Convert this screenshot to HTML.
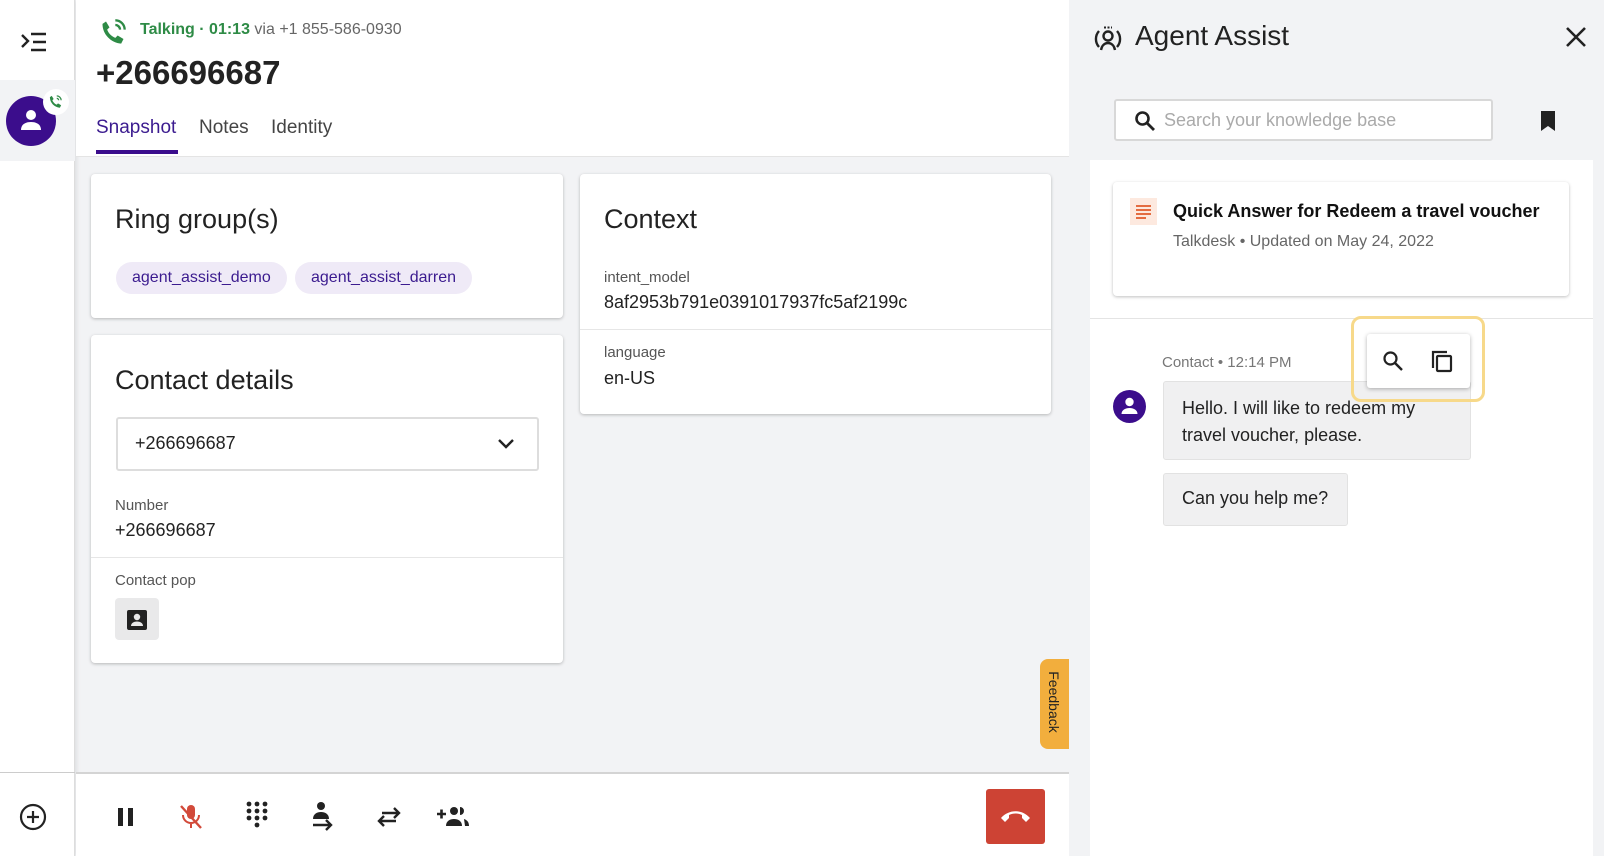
<!DOCTYPE html>
<html><head><meta charset="utf-8"><style>
*{box-sizing:border-box;margin:0;padding:0}
body{width:1604px;height:856px;position:relative;overflow:hidden;font-family:"Liberation Sans",sans-serif;background:#f2f3f5;color:#1c1c1e}
.a{position:absolute}
.card{position:absolute;background:#fff;border-radius:4px;box-shadow:0 1px 3px rgba(0,0,0,.25)}
.lbl{font-size:15px;color:#555}
.val{font-size:18px;color:#222}
.chip{position:absolute;height:32px;border-radius:16px;background:#efeaf7;color:#3b1b8f;font-size:16px;line-height:32px;padding:0 16px}
.ico{position:absolute}
</style></head><body>
<div class="a" style="left:0;top:0;width:75px;height:856px;background:#fff;border-right:1px solid #ddd;box-shadow:2px 0 4px rgba(0,0,0,.08)"></div>
<svg class="ico" style="left:20px;top:31px" width="28" height="22" viewBox="0 0 28 22"><path d="M2 4l6 6-6 6" fill="none" stroke="#222" stroke-width="2.4"/><path d="M11 3h15M13 11h13M11 19h15" stroke="#222" stroke-width="2.4"/></svg>
<div class="a" style="left:0;top:80px;width:75px;height:81px;background:#f2f3f5"></div>
<div class="a" style="left:6px;top:96px;width:50px;height:50px;border-radius:50%;background:#3b0d8c"></div>
<svg class="ico" style="left:20px;top:108px" width="22" height="24" viewBox="0 0 22 24"><circle cx="11" cy="7" r="5" fill="#fff"/><path d="M1 22c0-6 5-8 10-8s10 2 10 8z" fill="#fff"/></svg>
<div class="a" style="left:43px;top:89px;width:26px;height:26px;border-radius:50%;background:#fff"></div>
<svg class="ico" style="left:48px;top:94px" width="15" height="15" viewBox="0 0 24 24"><path d="M6 3l3 5-2 2c1 3 4 6 7 7l2-2 5 3-2 4C10 21 3 14 3 5z" fill="#2e8b46"/><path d="M14 3a7 7 0 0 1 7 7M14 7a3 3 0 0 1 3 3" stroke="#2e8b46" stroke-width="2" fill="none"/></svg>
<div class="a" style="left:0;top:772px;width:75px;height:1px;background:#ccc"></div>
<svg class="ico" style="left:19px;top:803px" width="28" height="28" viewBox="0 0 28 28"><circle cx="14" cy="14" r="12" fill="none" stroke="#222" stroke-width="2.2"/><path d="M14 8v12M8 14h12" stroke="#222" stroke-width="2.2"/></svg>

<div class="a" style="left:76px;top:0;width:993px;height:157px;background:#fff;border-bottom:1px solid #e4e4e4"></div>
<svg class="ico" style="left:99px;top:18px" width="28" height="28" viewBox="0 0 24 24"><path d="M6 3l3 5-2 2c1 3 4 6 7 7l2-2 5 3-2 4C10 21 3 14 3 5z" fill="#2e8b46"/><path d="M14 2a8 8 0 0 1 8 8M14 6a4 4 0 0 1 4 4" stroke="#2e8b46" stroke-width="2" fill="none"/></svg>
<div class="a" style="left:140px;top:21px;font-size:16px;color:#666"><b style="color:#2e8b46;font-weight:bold">Talking · 01:13</b> via +1 855-586-0930</div>
<div class="a" style="left:96px;top:54px;font-size:33px;font-weight:bold;color:#222">+266696687</div>
<div class="a" style="left:96px;top:117px;font-size:19px;color:#3b1b8f">Snapshot</div>
<div class="a" style="left:96px;top:150px;width:82px;height:4px;background:#3b0d8c"></div>
<div class="a" style="left:199px;top:117px;font-size:19px;color:#444">Notes</div>
<div class="a" style="left:271px;top:117px;font-size:19px;color:#444">Identity</div>

<div class="card" style="left:91px;top:174px;width:472px;height:144px">
<div class="a" style="left:24px;top:30px;font-size:27px;color:#222">Ring group(s)</div>
<div class="chip" style="left:25px;top:88px">agent_assist_demo</div>
<div class="chip" style="left:204px;top:88px">agent_assist_darren</div>
</div>
<div class="card" style="left:580px;top:174px;width:471px;height:240px">
<div class="a" style="left:24px;top:30px;font-size:27px;color:#222">Context</div>
<div class="a lbl" style="left:24px;top:95px">intent_model</div>
<div class="a val" style="left:24px;top:118px">8af2953b791e0391017937fc5af2199c</div>
<div class="a" style="left:0;top:155px;width:471px;height:1px;background:#e6e6e6"></div>
<div class="a lbl" style="left:24px;top:170px">language</div>
<div class="a val" style="left:24px;top:194px">en-US</div>
</div>
<div class="card" style="left:91px;top:335px;width:472px;height:328px">
<div class="a" style="left:24px;top:30px;font-size:27px;color:#222">Contact details</div>
<div class="a" style="left:25px;top:82px;width:423px;height:54px;border:2px solid #ddd;border-radius:3px"></div>
<div class="a val" style="left:44px;top:98px">+266696687</div>
<svg class="ico" style="left:406px;top:102px" width="18" height="14" viewBox="0 0 18 14"><path d="M2 3l7 7 7-7" fill="none" stroke="#222" stroke-width="2.4"/></svg>
<div class="a lbl" style="left:24px;top:162px">Number</div>
<div class="a val" style="left:24px;top:185px">+266696687</div>
<div class="a" style="left:0;top:222px;width:472px;height:1px;background:#e6e6e6"></div>
<div class="a lbl" style="left:24px;top:237px">Contact pop</div>
<div class="a" style="left:24px;top:263px;width:44px;height:42px;border-radius:4px;background:#e9e9ea"></div>
<svg class="ico" style="left:35px;top:274px" width="22" height="22" viewBox="0 0 22 22"><rect x="1" y="1" width="20" height="20" rx="2" fill="#222"/><circle cx="11" cy="8" r="3.2" fill="#e9e9ea"/><path d="M5 17c0-3 3-4.5 6-4.5s6 1.5 6 4.5z" fill="#e9e9ea"/></svg>
</div>

<div class="a" style="left:1040px;top:659px;width:29px;height:90px;background:#f2ae3d;border-radius:8px 0 0 8px"></div>
<div class="a" style="left:1009px;top:694px;width:90px;font-size:14px;color:#222;transform:rotate(90deg);text-align:center">Feedback</div>

<div class="a" style="left:76px;top:772px;width:993px;height:84px;background:#fff;border-top:2px solid #d4d4d4"></div>
<svg class="ico" style="left:115px;top:806px" width="22" height="22" viewBox="0 0 22 22"><rect x="3" y="2" width="5" height="18" fill="#222"/><rect x="13" y="2" width="5" height="18" fill="#222"/></svg>
<svg class="ico" style="left:178px;top:803px" width="26" height="28" viewBox="0 0 26 28"><rect x="9" y="2" width="8" height="14" rx="4" fill="#d24a3a"/><path d="M5 12c0 5 4 8 8 8s8-3 8-8M13 20v5" stroke="#d24a3a" stroke-width="2" fill="none"/><path d="M3 3l20 22" stroke="#d24a3a" stroke-width="2.4"/></svg>
<svg class="ico" style="left:244px;top:800px" width="26" height="32" viewBox="0 0 26 32"><g fill="#222"><circle cx="5" cy="4" r="2.4"/><circle cx="13" cy="4" r="2.4"/><circle cx="21" cy="4" r="2.4"/><circle cx="5" cy="11" r="2.4"/><circle cx="13" cy="11" r="2.4"/><circle cx="21" cy="11" r="2.4"/><circle cx="5" cy="18" r="2.4"/><circle cx="13" cy="18" r="2.4"/><circle cx="21" cy="18" r="2.4"/><circle cx="13" cy="25" r="2.4"/></g></svg>
<svg class="ico" style="left:310px;top:801px" width="26" height="32" viewBox="0 0 26 32"><circle cx="11" cy="5" r="4" fill="#222"/><path d="M3 18c0-5 4-7 8-7s8 2 8 7z" fill="#222"/><path d="M3 24h18M16 19l5 5-5 5" stroke="#222" stroke-width="2.4" fill="none"/></svg>
<svg class="ico" style="left:376px;top:805px" width="26" height="24" viewBox="0 0 26 24"><path d="M6 8h17M18 3l5 5-5 5M20 16H3M8 11l-5 5 5 5" stroke="#222" stroke-width="2.4" fill="none"/></svg>
<svg class="ico" style="left:436px;top:806px" width="34" height="22" viewBox="0 0 34 22"><path d="M1 8h9M5.5 3.5v9" stroke="#222" stroke-width="2.6"/><circle cx="18" cy="5" r="4" fill="#222"/><path d="M10 20c0-5 4-7 8-7s8 2 8 7z" fill="#222"/><path d="M24 1a4 4 0 0 1 0 8M28 13c3 1 5 3 5 7h-4" fill="#222"/></svg>
<div class="a" style="left:986px;top:789px;width:59px;height:55px;background:#cd4334;border-radius:3px"></div>
<svg class="ico" style="left:999px;top:806px" width="33" height="20" viewBox="0 0 33 20"><path d="M2 12c8-9 21-9 29 0l-4 4-4-4v-3c-4-2-9-2-13 0v3l-4 4z" fill="#fff"/></svg>

<div class="a" style="left:1069px;top:0;width:535px;height:856px;background:#f2f3f5"></div>
<div class="a" style="left:1090px;top:160px;width:503px;height:696px;background:#fff"></div>
<svg class="ico" style="left:1093px;top:24px" width="30" height="30" viewBox="0 0 30 30"><circle cx="15" cy="12" r="4.5" fill="none" stroke="#222" stroke-width="2.4"/><path d="M8 26c1-5 4-7 7-7s6 2 7 7" fill="none" stroke="#222" stroke-width="2.4"/><path d="M6 7a12 12 0 0 0 0 16M24 7a12 12 0 0 1 0 16" fill="none" stroke="#222" stroke-width="2.4"/><path d="M11 3.5h8" stroke="#222" stroke-width="2" stroke-dasharray="2 1.5"/></svg>
<div class="a" style="left:1135px;top:20px;font-size:28px;color:#222">Agent Assist</div>
<svg class="ico" style="left:1565px;top:26px" width="22" height="22" viewBox="0 0 22 22"><path d="M2 2l18 18M20 2L2 20" stroke="#222" stroke-width="2.6"/></svg>
<div class="a" style="left:1114px;top:99px;width:379px;height:42px;background:#fff;border:2px solid #d8d8d8;border-radius:3px"></div>
<svg class="ico" style="left:1134px;top:110px" width="22" height="22" viewBox="0 0 22 22"><circle cx="8.5" cy="8.5" r="6" fill="none" stroke="#222" stroke-width="2.6"/><path d="M13 13l7 7" stroke="#222" stroke-width="2.8"/></svg>
<div class="a" style="left:1164px;top:110px;font-size:18px;color:#aaa">Search your knowledge base</div>
<svg class="ico" style="left:1540px;top:110px" width="16" height="22" viewBox="0 0 16 22"><path d="M1 1h14v20l-7-5-7 5z" fill="#222"/></svg>

<div class="card" style="left:1113px;top:182px;width:456px;height:114px">
<div class="a" style="left:17px;top:16px;width:27px;height:27px;background:#fde9df"></div>
<svg class="ico" style="left:22px;top:22px" width="17" height="15" viewBox="0 0 17 15"><path d="M1 2h15M1 6h15M1 10h15M1 14h10" stroke="#e05b2b" stroke-width="1.8"/></svg>
<div class="a" style="left:60px;top:19px;font-size:18px;font-weight:bold;color:#111">Quick Answer for Redeem a travel voucher</div>
<div class="a" style="left:60px;top:51px;font-size:16px;color:#666">Talkdesk • Updated on May 24, 2022</div>
</div>
<div class="a" style="left:1090px;top:318px;width:503px;height:1px;background:#e4e4e4"></div>

<div class="a" style="left:1162px;top:354px;font-size:15px;color:#777">Contact • 12:14 PM</div>
<div class="a" style="left:1113px;top:390px;width:33px;height:33px;border-radius:50%;background:#3b0d8c"></div>
<svg class="ico" style="left:1120px;top:395px" width="19" height="22" viewBox="0 0 19 22"><circle cx="9.5" cy="7" r="4.2" fill="#fff"/><path d="M1.5 19c0-4 4-6 8-6s8 2 8 6z" fill="#fff"/></svg>
<div class="a" style="left:1163px;top:381px;width:308px;height:79px;background:#f0f0f1;border:1px solid #e2e2e2;border-radius:3px"></div>
<div class="a" style="left:1182px;top:395px;font-size:18px;line-height:27px;color:#222">Hello. I will like to redeem my<br>travel voucher, please.</div>
<div class="a" style="left:1163px;top:473px;width:185px;height:53px;background:#f0f0f1;border:1px solid #e2e2e2;border-radius:3px"></div>
<div class="a" style="left:1182px;top:488px;font-size:18px;color:#222">Can you help me?</div>

<div class="a" style="left:1351px;top:316px;width:134px;height:86px;border:3px solid #f7d98a;border-radius:10px"></div>
<div class="a" style="left:1367px;top:334px;width:103px;height:54px;background:#fff;border-radius:3px;box-shadow:0 1px 4px rgba(0,0,0,.3)"></div>
<svg class="ico" style="left:1382px;top:350px" width="22" height="22" viewBox="0 0 22 22"><circle cx="8.5" cy="8.5" r="6" fill="none" stroke="#222" stroke-width="2.2"/><path d="M13 13l7 7" stroke="#222" stroke-width="2.4"/></svg>
<svg class="ico" style="left:1430px;top:349px" width="24" height="24" viewBox="0 0 24 24"><path d="M3 19V3h14" fill="none" stroke="#222" stroke-width="2.2"/><rect x="7" y="7" width="14" height="15" rx="1" fill="none" stroke="#222" stroke-width="2.2"/></svg>
</body></html>
